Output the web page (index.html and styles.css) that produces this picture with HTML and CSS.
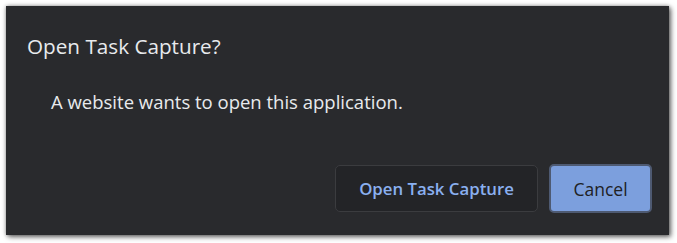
FILE: index.html
```html
<!DOCTYPE html>
<html>
<head>
<meta charset="utf-8">
<link rel="stylesheet" href="styles.css">
</head>
<body>
<div class="dialog">
  <h1 class="title">Open Task Capture?</h1>
  <p class="message">A website wants to open this application.</p>
  <div class="actions">
    <button class="btn btn-secondary">Open Task Capture</button>
    <button class="btn btn-primary">Cancel</button>
  </div>
</div>
</body>
</html>
```
FILE: styles.css
```css
html, body {
  margin: 0;
  padding: 0;
  background: #ffffff;
  width: 677px;
  height: 243px;
  overflow: hidden;
}
body {
  padding: 6px;
  box-sizing: border-box;
  font-family: "Open Sans", "Noto Sans", sans-serif;
}
.dialog {
  width: 663px;
  height: 229px;
  box-sizing: border-box;
  background: #292a2d;
  box-shadow: 2px 2px 5px rgba(0,0,0,0.55), 0 0 4px rgba(0,0,0,0.35);
  display: flex;
  flex-direction: column;
  padding: 27px 17px 22px 21px;
}
.title {
  margin: 0;
  font-size: 20.7px;
  font-weight: 400;
  line-height: 26px;
  color: #e8eaed;
}
.message {
  margin: 31px 0 0 24px;
  font-size: 18.5px;
  line-height: 24px;
  color: #e8eaed;
}
.actions {
  margin-top: auto;
  display: flex;
  justify-content: flex-end;
  align-items: center;
  gap: 11px;
}
.btn {
  font-family: "Open Sans", "Noto Sans", sans-serif;
  border-radius: 5px;
  cursor: pointer;
}
.btn-secondary {
  width: 203px;
  height: 47px;
  background: #232427;
  border: 1px solid #3b3c3f;
  color: #8ab0f0;
  font-size: 16.8px;
  font-weight: 600;
}
.btn-primary {
  width: 103px;
  height: 49px;
  background: #7c9fdd;
  border: 2px solid #4e5a72;
  color: #202124;
  font-size: 17.5px;
  font-weight: 500;
}
```
